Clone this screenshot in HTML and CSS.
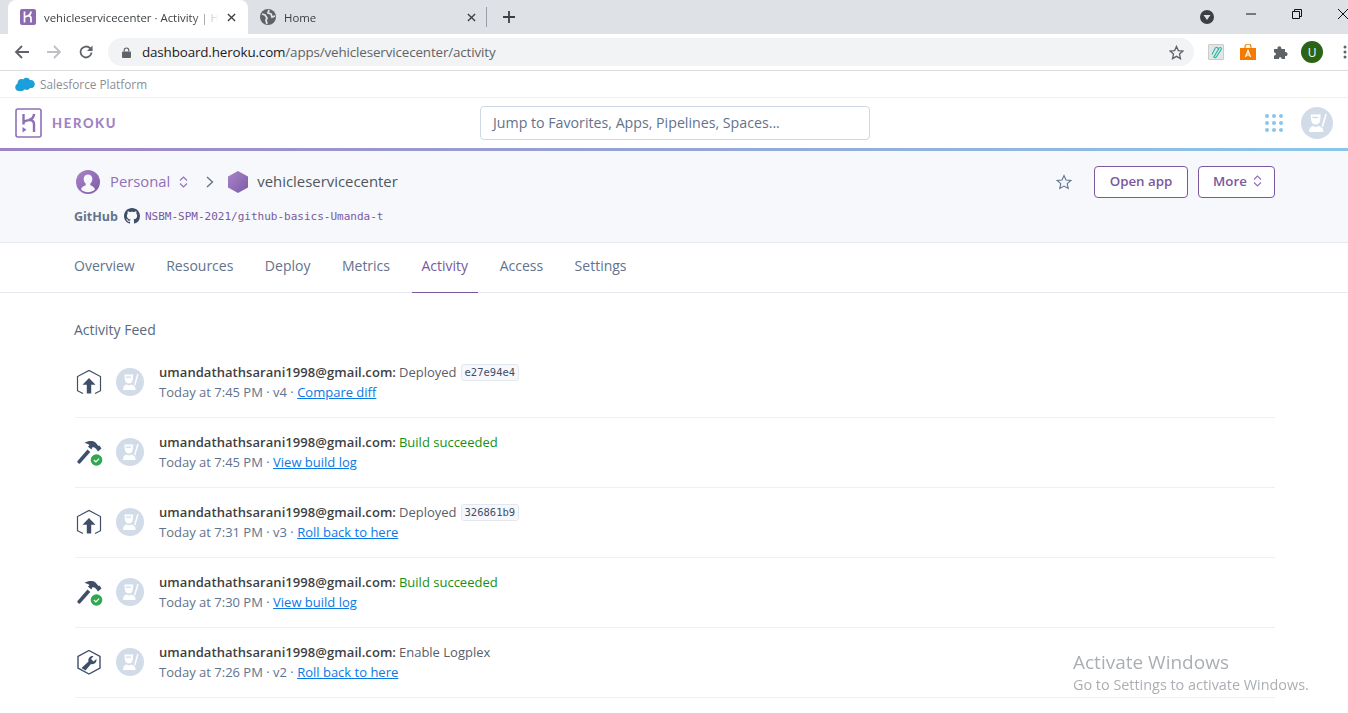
FILE: index.html
```html
<!DOCTYPE html>
<html lang="en">
<head>
<meta charset="utf-8">
<title>vehicleservicecenter · Activity | Heroku</title>
<link rel="stylesheet" href="styles.css">
</head>
<body>
<svg class="defs" width="0" height="0">
  <defs>
    <symbol id="ninja" viewBox="0 0 30 30">
      <circle cx="15" cy="15" r="15" fill="#d2dce9"/>
      <path d="M9 7h9.500l-.5 5.500c-.2 2.500-2 4-4.200 4s-4-1.500-4.300-4z" fill="#fff"/>
      <path d="M10.500 9.800h5.500" stroke="#d2dce9" stroke-width="1.400"/>
      <path d="M7.500 23.500c0-3 1-5 3.500-5.800l3 1 3-1 1.500 1 2 1.500.5 3.300z" fill="#fff"/>
      <path d="M23.500 6.500l-3.500 12" stroke="#fff" stroke-width="1.500"/>
    </symbol>
    <symbol id="deploy" viewBox="0 0 28 28">
      <path d="M8 25.500 2.500 22.700V8.500L14 2.500l11.500 6v14.200L20 25.500" fill="none" stroke="#3f4f69" stroke-width="1.200"/>
      <path d="M14 10l6.500 6.800h-4.300v8.700h-4.400v-8.700H7.500z" fill="#3f4f69"/>
    </symbol>
    <symbol id="build" viewBox="0 0 28 28">
      <path d="M2.500 23l10-11.500 2.800 2.500L5 25.500c-1 .8-3.500-1.200-2.500-2.500z" fill="#3f4f69"/>
      <path d="M9.500 5c4-2.500 8-2.500 11-.5l3 3.500 1-.5 2 3-3.500 3-1.800-2.500c-1.500-1.500-2.500-2-4-1.500l-.7 2-3.500-2.800 1.500-1.700C13 5.800 11.500 5.300 9.500 5z" fill="#3f4f69"/>
      <circle cx="21.500" cy="22" r="5.800" fill="#2fa84f"/>
      <path d="M18.900 22l2 2 3.200-3.400" fill="none" stroke="#fff" stroke-width="1.200"/>
    </symbol>
    <symbol id="config" viewBox="0 0 28 28">
      <path d="M14 2.500 25 8.500v11.500L14 26 3 20V8.500z" fill="none" stroke="#3f4f69" stroke-width="1.400"/>
      <path d="M6.500 20l7-6.500c-.8-3 1.500-6 5-5.500l-2.500 3 2.500 2.500 3-2.500c.4 3.500-2.500 6-5.500 5l-5.500 6.500z" fill="#3f4f69"/>
    </symbol>
  </defs>
</svg>

<div class="tabstrip">
  <div class="tab tab-active">
    <svg class="favicon" viewBox="0 0 16 16"><rect width="16" height="16" rx="2" fill="#8c6bb1"/><path d="M4.500 2.500v11M4.500 8.500c3-2.500 6.500-2 6.500 1v4M11 2.500c0 2-1 3-2.500 3.700" fill="none" stroke="#fff" stroke-width="1.700"/></svg>
    <span class="tab-title">vehicleservicecenter · Activity | Heroku</span>
    <svg class="tab-x" viewBox="0 0 10 10"><path d="M1 1l8 8M9 1l-8 8" stroke="#3c4043" stroke-width="1.500"/></svg>
  </div>
  <div class="tab tab-second">
    <svg class="favicon" viewBox="0 0 16 16"><circle cx="8" cy="8" r="8" fill="#5f6368"/><path d="M2 5l3 1 2 3-1 2 1 4M9 1l-1 3 3 1 1 3 3-1" fill="none" stroke="#dee1e6" stroke-width="1.800"/></svg>
    <span class="tab-title">Home</span>
    <svg class="tab-x" viewBox="0 0 10 10"><path d="M1 1l8 8M9 1l-8 8" stroke="#3c4043" stroke-width="1.500"/></svg>
  </div>
  <span class="tab-sep"></span>
  <svg class="tab-plus" viewBox="0 0 12 12"><path d="M6 0v12M0 6h12" stroke="#3c4043" stroke-width="1.800"/></svg>
  <svg class="media" viewBox="0 0 14 14"><circle cx="7" cy="7" r="7" fill="#3c4043"/><path d="M3.500 5h7L7 10z" fill="#dee1e6"/></svg>
  <div class="winctrls">
    <svg viewBox="0 0 10 10"><path d="M0 5h10" stroke="#111" stroke-width="1"/></svg>
    <svg viewBox="0 0 10 10"><path d="M2.500 2.500V.5h7v7H7.500M.5 2.500h7v7h-7z" fill="none" stroke="#111" stroke-width="1"/></svg>
    <svg viewBox="0 0 10 10"><path d="M0 0l10 10M10 0 0 10" stroke="#111" stroke-width="1"/></svg>
  </div>
</div>

<div class="toolbar">
  <svg class="navicon" viewBox="0 0 16 16"><path d="M15 8H2M8 2 2 8l6 6" fill="none" stroke="#5f6368" stroke-width="1.800"/></svg>
  <svg class="navicon" viewBox="0 0 16 16"><path d="M1 8h13M8 2l6 6-6 6" fill="none" stroke="#bdc1c6" stroke-width="1.800"/></svg>
  <svg class="navicon" viewBox="0 0 16 16"><path d="M13.500 8.500a5.500 5.500 0 1 1-1.500-4.300L14 6.500" fill="none" stroke="#5f6368" stroke-width="1.800"/><path d="M14.500 1.500v5.500H9z" fill="#5f6368"/></svg>
  <div class="omnibox">
    <svg class="lock" viewBox="0 0 10 12"><path d="M2.500 5V3.500a2.500 2.500 0 0 1 5 0V5" fill="none" stroke="#5f6368" stroke-width="1.300"/><rect y="5" width="10" height="7" rx="1" fill="#5f6368"/></svg>
    <span class="url"><span class="url-host">dashboard.heroku.com</span>/apps/vehicleservicecenter/activity</span>
    <svg class="omni-star" viewBox="0 0 16 16"><path d="M8 1.500l2 4.500 4.800.5-3.600 3.200 1 4.800L8 12.100l-4.200 2.400 1-4.800L1.200 6.500 6 6z" fill="none" stroke="#5f6368" stroke-width="1.400"/></svg>
  </div>
  <svg class="ext" viewBox="0 0 16 16"><rect x=".3" y=".3" width="15.400" height="15.400" rx="1.500" fill="#e3e6e6" stroke="#a8a8a8" stroke-width=".6"/><path d="M5.500 13.500 11 4.200c.9-1.500 3-.4 2.200 1.200L8.300 13c-.8 1.200-2.500.3-1.800-1l4-6.800-.8-1.400c-1-.9-2.300-.3-2.700.7L4 10.500" fill="none" stroke="#27b9a3" stroke-width="1.100"/></svg>
  <svg class="ext ext-bag" viewBox="0 0 16 16"><path d="M0 4h16v12H0z" fill="#f57b00"/><path d="M5 4.500V3a3 3 0 0 1 6 0v1.500" fill="none" stroke="#f57b00" stroke-width="1.200"/><path d="M5.500 13 8 6.500l2.500 6.500M6.500 11h3" fill="none" stroke="#fff" stroke-width="1.200"/></svg>
  <svg class="ext ext-puzzle" viewBox="0 0 16 16"><path d="M1 5h3.500c-.8-3 3.800-4 4 0H12v3c3.500-.5 3.500 4.500 0 4v3H8.500c.5-2.500-3-2.500-2.500 0H1v-3.500c2.500.5 2.500-3.500 0-3z" fill="#5f6368"/></svg>
  <span class="profile">U</span>
  <svg class="kebab" viewBox="0 0 4 14"><circle cx="2" cy="2" r="1.500" fill="#5f6368"/><circle cx="2" cy="7" r="1.500" fill="#5f6368"/><circle cx="2" cy="12" r="1.500" fill="#5f6368"/></svg>
</div>

<div class="sf-bar">
  <svg class="sf-cloud" viewBox="0 0 20 14"><path d="M4.500 14C1 14 0 11.500.3 9.800.5 8 1.800 7 2.500 6.500 2.500 3 5.500 1 8 2.500 10 0 14 .5 14.800 3 18 2.500 20 5 19.800 7.500 19.500 10.500 17 11.500 15 11c-1 2-3.500 2.500-5 1.300C8.500 14 6 14.500 4.500 14z" fill="#1b9fdb"/></svg>
  <span>Salesforce Platform</span>
</div>

<header class="hk-head">
  <div class="brand">
    <svg class="brand-mark" viewBox="0 0 27 30"><rect x="1" y="1" width="25" height="28" rx="2" fill="none" stroke="#8f70b8" stroke-width="1.600"/><path d="M8.500 6v10.500M8.500 14c4.500-3 10.500-2.500 10.500 2v8M19 6c0 3-2 5-5 6" fill="none" stroke="#8f70b8" stroke-width="2.400"/><path d="M7.500 19l4 2.700-4 2.800z" fill="#8f70b8"/></svg>
    <span class="brand-name">HEROKU</span>
  </div>
  <div class="jump">Jump to Favorites, Apps, Pipelines, Spaces...</div>
  <div class="head-right">
    <svg class="apps" viewBox="0 0 18 18"><g fill="#8bc6ea"><circle cx="2" cy="2" r="2"/><circle cx="9" cy="2" r="2"/><circle cx="16" cy="2" r="2"/><circle cx="2" cy="9" r="2"/><circle cx="9" cy="9" r="2"/><circle cx="16" cy="9" r="2"/><circle cx="2" cy="16" r="2"/><circle cx="9" cy="16" r="2"/><circle cx="16" cy="16" r="2"/></g></svg>
    <svg class="head-avatar"><use href="#ninja"/></svg>
  </div>
</header>
<div class="rainbow"></div>

<section class="app-head">
  <div class="crumbs">
    <div class="crumb-left">
      <svg class="owner" viewBox="0 0 26 26"><defs><linearGradient id="pg" x1="0" y1="0" x2="1" y2="1"><stop offset="0" stop-color="#a884c9"/><stop offset="1" stop-color="#7d5ba6"/></linearGradient></defs><circle cx="13" cy="13" r="13" fill="url(#pg)"/><path d="M5.500 21c1-3.500 3.500-3.500 5-4.500v-1.500C8.500 13 8 10.500 8.500 8.500c.5-2.500 2.500-3.500 4.500-3.500s4 1 4.500 3.500c.5 2-.000 4.500-2 6.500v1.500c1.500 1 4 1 5 4.500-4 4-11 4-15 0z" fill="#f7f8fb"/></svg>
      <span class="owner-name">Personal</span>
      <svg class="updown" viewBox="0 0 9 12"><path d="M1 4.500 4.500 1 8 4.500M1 7.500 4.500 11 8 7.500" fill="none" stroke="#8f70b8" stroke-width="1.100"/></svg>
      <svg class="chev" viewBox="0 0 8 12"><path d="M1 1l5.500 5L1 11" fill="none" stroke="#5f6f89" stroke-width="1.300"/></svg>
      <svg class="hex" viewBox="0 0 21 23"><path d="M10.500 0 21 5.700v11.600L10.500 23 0 17.300V5.700z" fill="url(#pg)"/></svg>
      <span class="app-name">vehicleservicecenter</span>
    </div>
    <div class="crumb-right">
      <svg class="fav" viewBox="0 0 16 16"><path d="M8 1.500l2 4.500 4.800.5-3.600 3.200 1 4.800L8 12.100l-4.200 2.400 1-4.800L1.200 6.500 6 6z" fill="none" stroke="#5f7593" stroke-width="1.100"/></svg>
      <span class="btn btn-open">Open app</span>
      <span class="btn btn-more">More <svg class="updown updown-btn" viewBox="0 0 9 12"><path d="M1 4.500 4.500 1 8 4.500M1 7.500 4.500 11 8 7.500" fill="none" stroke="#8f70b8" stroke-width="1.100"/></svg></span>
    </div>
  </div>
  <div class="repo">
    <span class="repo-label">GitHub</span>
    <svg class="gh" viewBox="0 0 16 16"><path fill="#3f4f69" d="M8 0C3.580 0 0 3.580 0 8c0 3.540 2.290 6.530 5.470 7.590.4.070.55-.17.55-.38 0-.19-.01-.82-.01-1.490-2.010.37-2.530-.49-2.690-.94-.09-.23-.48-.94-.82-1.130-.28-.15-.68-.52-.01-.53.63-.01 1.080.58 1.230.82.720 1.210 1.870.87 2.330.66.070-.52.280-.87.510-1.070-1.780-.2-3.640-.89-3.640-3.950 0-.87.310-1.590.820-2.150-.08-.2-.36-1.020.08-2.120 0 0 .67-.21 2.200.82.640-.18 1.320-.27 2-.27s1.360.09 2 .27c1.530-1.040 2.200-.82 2.200-.82.440 1.100.160 1.920.080 2.120.51.560.82 1.270.82 2.150 0 3.070-1.870 3.750-3.650 3.950.29.250.54.730.54 1.480 0 1.070-.01 1.930-.01 2.200 0 .21.150.46.550.38A8.010 8.010 0 0 0 16 8c0-4.420-3.580-8-8-8z"/></svg>
    <span class="repo-path">NSBM-SPM-2021/github-basics-Umanda-t</span>
  </div>
</section>

<nav class="tabs">
  <a class="nav-item">Overview</a>
  <a class="nav-item">Resources</a>
  <a class="nav-item">Deploy</a>
  <a class="nav-item">Metrics</a>
  <a class="nav-item nav-current">Activity</a>
  <a class="nav-item">Access</a>
  <a class="nav-item">Settings</a>
</nav>

<main class="feed">
  <h2 class="feed-title">Activity Feed</h2>
  <ul class="items">
    <li class="item">
      <svg class="kind"><use href="#deploy"/></svg>
      <svg class="avatar"><use href="#ninja"/></svg>
      <div class="body">
        <div class="line"><b>umandathathsarani1998@gmail.com:</b> Deployed <code class="sha">e27e94e4</code></div>
        <div class="meta">Today at 7:45 PM · v4 · <a class="link">Compare diff</a></div>
      </div>
    </li>
    <li class="item">
      <svg class="kind"><use href="#build"/></svg>
      <svg class="avatar"><use href="#ninja"/></svg>
      <div class="body">
        <div class="line"><b>umandathathsarani1998@gmail.com:</b> <span class="ok">Build succeeded</span></div>
        <div class="meta">Today at 7:45 PM · <a class="link">View build log</a></div>
      </div>
    </li>
    <li class="item">
      <svg class="kind"><use href="#deploy"/></svg>
      <svg class="avatar"><use href="#ninja"/></svg>
      <div class="body">
        <div class="line"><b>umandathathsarani1998@gmail.com:</b> Deployed <code class="sha">326861b9</code></div>
        <div class="meta">Today at 7:31 PM · v3 · <a class="link">Roll back to here</a></div>
      </div>
    </li>
    <li class="item">
      <svg class="kind"><use href="#build"/></svg>
      <svg class="avatar"><use href="#ninja"/></svg>
      <div class="body">
        <div class="line"><b>umandathathsarani1998@gmail.com:</b> <span class="ok">Build succeeded</span></div>
        <div class="meta">Today at 7:30 PM · <a class="link">View build log</a></div>
      </div>
    </li>
    <li class="item">
      <svg class="kind"><use href="#config"/></svg>
      <svg class="avatar"><use href="#ninja"/></svg>
      <div class="body">
        <div class="line"><b>umandathathsarani1998@gmail.com:</b> Enable Logplex</div>
        <div class="meta">Today at 7:26 PM · v2 · <a class="link">Roll back to here</a></div>
      </div>
    </li>
  </ul>
</main>

<div class="activate">
  <div class="activate-title">Activate Windows</div>
  <div class="activate-sub">Go to Settings to activate Windows.</div>
</div>
</body>
</html>
```
FILE: styles.css
```css
* { box-sizing: border-box; }
html, body { margin: 0; padding: 0; height: 713px; overflow: hidden; }
body { font-family: "Open Sans", "Liberation Sans", sans-serif; background: #fff; color: #3f3f44; position: relative; }
svg { display: block; flex: none; }
.defs { position: absolute; }

.tabstrip { height: 34px; background: #dee1e6; display: flex; align-items: center; padding-left: 8px; font-size: 11.400px; color: #3c4043; }
.tab { width: 240px; height: 34px; display: flex; align-items: center; padding: 0 12px; gap: 8px; }
.tab-active { background: #fff; border-radius: 8px 8px 0 0; }
.tab-second { width: 239px; padding-right: 11px; }
.tab-title { flex: 1; overflow: hidden; white-space: nowrap; -webkit-mask-image: linear-gradient(90deg, #000 85%, transparent); mask-image: linear-gradient(90deg, #000 85%, transparent); }
.favicon { width: 16px; height: 16px; }
.tab-x { width: 9px; height: 9px; }
.tab-sep { width: 1px; height: 20px; background: #9aa0a6; margin-left: -1px; }
.tab-plus { width: 12px; height: 12px; margin-left: 16px; }
.media { width: 14px; height: 14px; margin-left: auto; margin-right: 32px; }
.winctrls { display: flex; gap: 36px; }
.winctrls svg { width: 10px; height: 10px; margin-bottom: 6px; }

.toolbar { height: 37px; border-bottom: 1px solid #dadce0; display: flex; align-items: center; padding-left: 14px; }
.navicon { width: 16px; height: 16px; margin-right: 16px; }
.omnibox { width: 1086px; height: 28px; margin: 0 14px 0 -2px; border-radius: 14px; background: #f1f3f4; display: flex; align-items: center; padding: 0 10px 0 14px; }
.lock { width: 9px; height: 11px; margin-right: 11px; }
.url { flex: 1; font-size: 13.400px; color: #5f6368; letter-spacing: -.01em; white-space: nowrap; }
.url-host { color: #202124; }
.omni-star { width: 15px; height: 15px; }
.ext { width: 16px; height: 16px; }
.ext-bag { margin-left: 16px; }
.ext-puzzle { margin-left: 17px; }
.profile { width: 22px; height: 22px; border-radius: 50%; background: #2b6414; color: #fff; font-size: 12px; display: flex; align-items: center; justify-content: center; margin-left: 12px; }
.kebab { width: 4px; height: 14px; margin-left: 20px; }

.sf-bar { height: 27px; border-bottom: 1px solid #eef0f3; display: flex; align-items: center; gap: 5px; padding: 0 0 1px 15px; font-size: 11.800px; color: #8a8f98; }
.sf-cloud { width: 20px; height: 14px; }

.hk-head { height: 50px; display: flex; align-items: center; position: relative; padding: 0 15px; }
.brand { display: flex; align-items: center; gap: 10px; }
.brand-mark { width: 27px; height: 30px; }
.brand-name { font-family: "Lato", sans-serif; font-weight: 900; font-size: 13px; letter-spacing: .13em; color: #a083c4; }
.jump { position: absolute; left: 480px; top: 8px; width: 390px; height: 34px; border: 1px solid #cfd7e6; border-radius: 4px; padding: 0 12px; font-size: 14.200px; line-height: 32px; color: #62738d; }
.head-right { margin-left: auto; display: flex; align-items: center; gap: 18px; }
.apps { width: 18px; height: 18px; }
.head-avatar { width: 32px; height: 32px; }
.rainbow { height: 3px; background: linear-gradient(90deg, #9f84c4, #8bc6ea); }

.app-head { height: 92px; background: #f7f8fb; border-bottom: 1px solid #e6e9f0; padding: 15px 73px 0 75px; }
.crumbs { display: flex; align-items: center; justify-content: space-between; height: 32px; }
.crumb-left { display: flex; align-items: center; }
.owner { width: 24px; height: 24px; margin-left: 1px; }
.owner-name { font-size: 14.800px; color: #8f70b8; margin: -2px 0 0 10px; }
.updown { width: 9px; height: 12px; margin-left: 9px; }
.chev { width: 8px; height: 12px; margin-left: 18px; }
.hex { width: 20px; height: 22px; margin-left: 14px; }
.app-name { font-size: 14.900px; color: #4f5660; margin: -2px 0 0 9px; }
.crumb-right { display: flex; align-items: center; }
.fav { width: 16px; height: 16px; margin-right: 22px; }
.btn { height: 32px; border: 1px solid #79589f; border-radius: 4px; background: #fff; color: #79589f; font-size: 13.300px; font-weight: 600; display: flex; align-items: center; justify-content: center; padding-bottom: 2px; }
.btn-open { width: 94px; }
.btn-more { width: 77px; margin-left: 10px; gap: 6px; padding-left: 2px; }
.updown-btn { margin-left: 0; }
.repo { display: flex; align-items: center; margin: 8px 0 0 -1px; height: 20px; }
.repo-label { font-size: 12.500px; font-weight: 700; color: #62738d; }
.gh { width: 16px; height: 16px; margin-left: 6px; }
.repo-path { font-family: "DejaVu Sans Mono", monospace; font-size: 11px; color: #79589f; margin-left: 5px; }

.tabs { height: 50px; border-bottom: 1px solid #e6e9f0; display: flex; padding-left: 64px; font-size: 14px; }
.nav-item { padding: 0 10px; margin-right: 11.500px; line-height: 46px; color: #62738d; height: 50px; }
.nav-current { color: #79589f; border-bottom: 1px solid #79589f; }

.feed { padding: 0 73px 0 75px; }
.feed-title { font-size: 14px; font-weight: 400; color: #596981; margin: 27px 0 8px -1px; line-height: 20px; }
.items { list-style: none; margin: 0; padding: 0; }
.item { height: 70px; border-bottom: 1px solid #eef0f5; display: flex; align-items: center; padding-bottom: 1px; }
.kind { width: 28px; height: 28px; }
.avatar { width: 28px; height: 28px; margin-left: 13px; }
.body { margin-left: 15px; font-size: 13px; line-height: 20px; }
.line { color: #596069; display: flex; align-items: center; gap: 3px; white-space: nowrap; }
.line b { font-weight: 600; color: #3f3f44; letter-spacing: .06px; }
.meta { color: #62738d; }
.link { color: #0b79e3; text-decoration: underline; }
.ok { color: #139114; }
.sha { font-family: "DejaVu Sans Mono", monospace; font-size: 10.500px; line-height: 15px; border: 1px solid #e3e7ef; border-radius: 3px; background: #f7f8fb; padding: 0 3px; color: #3f4f69; margin-left: 1px; }

.activate { position: absolute; left: 1073px; top: 650px; color: #8f9499; opacity: .75; }
.activate-title { font-size: 19px; line-height: 24px; }
.activate-sub { font-size: 14.400px; line-height: 22px; }
```
